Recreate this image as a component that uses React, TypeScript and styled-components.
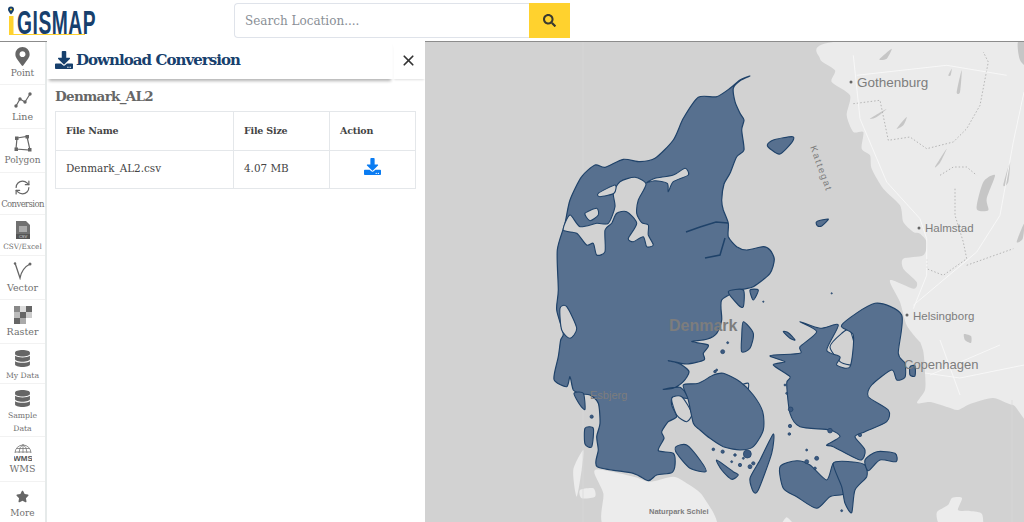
import React from "react";
import styled, { createGlobalStyle } from "styled-components";
import { FaDownload, FaMapMarkerAlt, FaSearch, FaStar, FaDatabase } from "react-icons/fa";
import { RefreshCw, X } from "lucide-react";

type Pt = [number, number];

// traced from crops of the map, so the numbers stay in crop coordinates
const north = (pts: Pt[]) => pts.map(([x, y]): Pt => [540 + x / 3, 60 + y / 3]);
const south = (pts: Pt[]) => pts.map(([x, y]): Pt => [540 + x / 3, 290 + y / 3]);
const right = (pts: Pt[]) => pts.map(([x, y]): Pt => [820 + x / 3, 42 + y / 3]);

// closed catmull-rom curve, coastlines look too angular as plain polygons
const toD = (pts: Pt[]) => {
  const n = pts.length;
  let d = `M${pts[0][0].toFixed(1)} ${pts[0][1].toFixed(1)}`;
  for (let i = 0; i < n; i++) {
    const [p0, p1, p2, p3] = [pts[(i - 1 + n) % n], pts[i], pts[(i + 1) % n], pts[(i + 2) % n]];
    const c1x = p1[0] + (p2[0] - p0[0]) / 8;
    const c1y = p1[1] + (p2[1] - p0[1]) / 8;
    const c2x = p2[0] - (p3[0] - p1[0]) / 8;
    const c2y = p2[1] - (p3[1] - p1[1]) / 8;
    d += `C${c1x.toFixed(1)} ${c1y.toFixed(1)} ${c2x.toFixed(1)} ${c2y.toFixed(1)} ${p2[0].toFixed(1)} ${p2[1].toFixed(1)}`;
  }
  return d + "Z";
};
const toLine = (pts: Pt[]) => "M" + pts.map(([x, y]) => `${x.toFixed(1)} ${y.toFixed(1)}`).join("L");

const jutland = toD([
  ...north([[630, 48], [600, 62], [580, 85], [585, 125], [600, 160], [612, 180], [605, 210], [612, 270], [590, 290], [570, 340], [552, 372], [545, 420], [550, 450], [565, 490], [565, 530], [590, 560], [620, 570], [670, 560], [690, 570], [703, 598], [690, 640], [640, 680], [600, 690]]),
  ...south([[545, 30], [545, 90], [530, 130], [500, 148], [455, 155], [505, 165], [490, 190], [492, 210], [440, 222], [385, 212], [420, 222], [447, 245], [430, 275], [400, 295], [370, 298], [420, 292], [445, 325], [400, 320], [395, 345], [410, 380], [385, 395], [365, 425], [372, 445], [355, 482], [400, 490], [405, 525], [395, 548], [350, 555], [325, 572], [280, 550], [172, 530], [175, 480], [170, 440], [180, 400], [175, 340], [150, 315], [125, 312], [100, 300], [90, 260], [80, 290], [42, 268], [55, 200], [62, 150], [70, 130], [50, 60], [55, 0]]),
  ...north([[52, 570], [75, 490], [90, 420], [125, 350], [165, 315], [195, 322], [250, 298], [300, 305], [345, 295], [400, 240], [430, 175], [475, 112], [530, 110], [570, 85], [600, 60]]),
]);

const fjords = [
  toD(north([[320, 368], [345, 355], [400, 345], [435, 325], [445, 345], [400, 365], [385, 395], [382, 370], [345, 362]])),
  toD(north([[240, 365], [285, 352], [318, 372], [295, 420], [290, 460], [305, 488], [325, 495], [325, 525], [340, 555], [320, 560], [310, 530], [280, 545], [265, 535], [290, 490], [260, 455], [230, 460], [215, 490], [195, 510], [195, 575], [170, 585], [160, 550], [140, 555], [110, 520], [70, 510], [90, 465], [120, 500], [170, 490], [205, 490], [225, 440], [220, 400]])),
  toD(north([[175, 400], [225, 375], [222, 400], [180, 410]])),
  toD(north([[135, 460], [170, 445], [175, 465], [150, 482]])),
  toD(south([[60, 55], [80, 50], [110, 115], [90, 145], [65, 120]])),
  toD(south([[395, 325], [425, 320], [455, 370], [440, 395], [410, 375]])),
  toD(south([[595, 290], [625, 280], [620, 310], [590, 315]])),
  toD(south([[870, 170], [905, 130], [930, 120], [950, 190], [960, 225], [930, 225], [900, 215]])),
];

const islands = [
  toD(north([[682, 255], [700, 240], [758, 230], [755, 248], [720, 282], [695, 270]])),
  toD(north([[830, 485], [865, 477], [845, 498], [832, 497]])),
  // Funen
  toD(south([[430, 285], [475, 280], [520, 255], [550, 250], [600, 275], [640, 315], [668, 365], [670, 420], [640, 470], [600, 480], [550, 470], [510, 445], [480, 420], [460, 400], [445, 330]])),
  // Als
  toD(south([[408, 470], [440, 465], [480, 510], [498, 545], [450, 535], [410, 490]])),
  // Langeland
  toD(south([[700, 432], [695, 490], [655, 600], [640, 605], [630, 565], [660, 510]])),
  // Aero
  toD(south([[530, 510], [580, 545], [595, 555], [575, 568], [545, 540]])),
  // Samso
  toD(south([[610, 95], [640, 130], [630, 175], [605, 185], [605, 140]])),
  toD(south([[565, 5], [610, 0], [610, 50], [595, 45]])),
  toD(south([[630, 0], [655, 0], [640, 30]])),
  toD(south([[135, 415], [160, 415], [155, 470], [135, 462]])),
  toD(south([[102, 310], [130, 310], [135, 358], [120, 345]])),
  // Zealand
  toD(south([[690, 197], [780, 190], [780, 170], [830, 125], [780, 95], [840, 115], [895, 105], [860, 180], [900, 200], [890, 225], [930, 230], [940, 135], [905, 105], [1005, 40], [1085, 75], [1075, 190], [1095, 220], [1095, 262], [1070, 270], [1055, 240], [995, 285], [985, 320], [1045, 360], [1040, 395], [975, 425], [945, 440], [975, 480], [960, 510], [880, 470], [860, 465], [900, 440], [870, 420], [780, 410], [750, 370], [740, 280], [750, 260], [700, 225], [735, 215]])),
  // Lolland
  toD(south([[720, 530], [770, 512], [810, 525], [860, 570], [880, 520], [905, 560], [915, 610], [870, 620], [830, 655], [770, 620], [730, 595]])),
  // Falster
  toD(south([[880, 520], [930, 515], [975, 525], [980, 560], [945, 600], [935, 668], [915, 640], [905, 590]])),
  // Mon
  toD(south([[975, 510], [1010, 485], [1065, 490], [1068, 515], [1020, 510], [985, 542]])),
  toD(south([[730, 125], [745, 128], [765, 150], [750, 145]])),
  toD(south([[1110, 230], [1125, 228], [1125, 258], [1110, 255]])),
];

const islets: [number, number, number][] = [
  [520, 478, 4], [548, 485, 5], [585, 495, 4], [622, 492, 12], [600, 525, 5], [630, 530, 6], [750, 408, 5], [748, 432, 4],
  [735, 285, 3], [740, 310, 3], [752, 358, 7], [525, 245, 4], [548, 185, 6], [800, 480, 3], [830, 505, 6], [825, 535, 4],
  [800, 515, 6], [870, 422, 7], [960, 435, 5], [875, 10, 2], [640, 520, 5], [575, 515, 3], [610, 505, 3], [905, 662, 3],
  [670, 35, 2], [155, 380, 5], [563, 158, 3], [530, 240, 3],
];

const sweden = toD([
  ...right([[40, 0], [0, 50], [45, 85], [35, 120], [90, 160], [80, 220], [100, 270], [130, 270], [125, 320], [150, 340], [155, 380], [190, 440], [240, 490], [250, 540], [280, 570], [300, 575], [320, 600], [310, 640], [250, 650], [250, 680], [290, 720], [280, 740], [210, 715], [240, 780], [260, 850], [300, 900]]),
  [915, 330], [923, 350], [925, 373], [925, 390], [917, 403], [930, 402], [947, 407], [958, 410], [970, 404], [993, 398], [1013, 405], [1040, 405], [1040, 30],
]);
const germany = toD(south([[165, 540], [280, 560], [330, 575], [400, 560], [440, 580], [490, 620], [520, 720], [205, 720], [190, 610]]));
const rugen = toD([[937, 512], [948, 505], [952, 498], [962, 498], [958, 510], [970, 511], [982, 514], [980, 530], [945, 530], [938, 522]]);

const lakes = [
  toD(right([[470, 500], [490, 420], [525, 400], [500, 470], [505, 505]])),
  toD(right([[345, 375], [380, 320], [360, 362]])),
  toD(right([[150, 230], [200, 200], [170, 225]])),
  toD(right([[178, 52], [215, 20], [200, 50]])),
  toD(right([[410, 150], [425, 85], [420, 150]])),
  toD(right([[550, 430], [570, 360], [565, 420]])),
  toD(right([[590, 600], [612, 545], [608, 590]])),
  toD(right([[385, 100], [395, 80], [392, 100]])),
  toD(right([[230, 260], [260, 225], [250, 250]])),
  toD([[1018, 42], [1030, 42], [1030, 68], [1020, 60]]),
  toD([[964, 334], [971, 336], [971, 343], [965, 340]]),
];

const dottedRoutes = [
  toLine(right([[100, 185], [180, 175], [205, 295], [270, 285], [320, 320], [400, 300], [440, 260], [480, 190], [505, 60], [490, 30]])),
  toLine(right([[360, 400], [400, 375], [440, 375], [470, 400]])),
  toLine(right([[405, 440], [405, 520], [430, 600], [440, 650], [370, 700], [320, 680], [320, 650]])),
  toLine(right([[440, 670], [580, 620]])),
  toLine(north([[340, 505], [375, 505], [430, 545], [490, 530]])),
];

const roads = [
  toLine(right([[100, 40], [120, 230], [200, 420], [300, 530], [320, 590], [320, 700], [280, 800]])),
  toLine(right([[612, 150], [580, 300], [540, 520], [470, 630], [280, 790]])),
  toLine(right([[110, 100], [380, 70], [560, 100]])),
  "M925 373L960 378L1024 365M940 340L960 395M930 375L1000 345",
];

const tools = [
  { label: "Point", size: 9, icon: <FaMapMarkerAlt size={19} /> },
  { label: "Line", size: 9.5, icon: <LineIcon /> },
  { label: "Polygon", size: 9, icon: <PolygonIcon /> },
  { label: "Conversion", size: 8.5, tight: true, icon: <RefreshCw size={17} strokeWidth={1.7} /> },
  { label: "CSV/Excel", size: 7.3, icon: <CsvIcon /> },
  { label: "Vector", size: 9.5, icon: <VectorIcon /> },
  { label: "Raster", size: 9.5, icon: <RasterIcon /> },
  { label: "My Data", size: 7.7, icon: <FaDatabase size={17} /> },
  { label: "Sample Data", size: 7.7, icon: <FaDatabase size={17} /> },
  { label: "WMS", size: 9.5, icon: <WmsIcon /> },
  { label: "More", size: 9, icon: <FaStar size={13} /> },
];

function LineIcon() {
  return (
    <svg width="18" height="18" viewBox="0 0 18 18" fill="none" stroke="#666" strokeWidth="1.2">
      <path d="M2 15L6 8L11 11L16 3" />
      <g fill="#666" stroke="none">
        <circle cx="2" cy="15" r="1.7" />
        <circle cx="6" cy="8" r="1.7" />
        <circle cx="11" cy="11" r="1.7" />
        <circle cx="16" cy="3" r="1.7" />
      </g>
    </svg>
  );
}

function PolygonIcon() {
  return (
    <svg width="18" height="18" viewBox="0 0 18 18" fill="none" stroke="#666" strokeWidth="1.2">
      <path d="M3 3L13 1.5L16 15L2 14Z" />
      <g fill="#666" stroke="none">
        <rect x="1" y="1.5" width="3.5" height="3.5" />
        <rect x="11.5" y="0" width="3.5" height="3.5" />
        <rect x="14" y="13" width="3.5" height="3.5" />
        <rect x="0.5" y="12.5" width="3.5" height="3.5" />
      </g>
    </svg>
  );
}

function CsvIcon() {
  return (
    <svg width="14" height="18" viewBox="0 0 14 18">
      <path d="M0 0H10L14 4V18H0Z" fill="#707070" />
      <path d="M3 5H11V11H3Z" fill="#aaa" />
      <path d="M0 13H14V18H0Z" fill="#555" />
      <text x="7" y="17" textAnchor="middle" fontFamily="Liberation Sans, sans-serif" fontSize="4" fill="#ddd">
        CSV
      </text>
    </svg>
  );
}

function VectorIcon() {
  return (
    <svg width="19" height="18" viewBox="0 0 19 18" fill="none" stroke="#666" strokeWidth="1.3">
      <path d="M2 1Q5 10 7 16Q9 6 17 2" />
      <circle cx="2" cy="1.5" r="1.2" fill="#666" stroke="none" />
      <circle cx="17" cy="2" r="1.5" fill="#666" stroke="none" />
    </svg>
  );
}

function RasterIcon() {
  return (
    <svg width="18" height="18" viewBox="0 0 18 18">
      <rect width="6" height="6" x="0" y="0" fill="#888" />
      <rect width="6" height="6" x="6" y="0" fill="#ddd" />
      <rect width="6" height="6" x="12" y="0" fill="#666" />
      <rect width="6" height="6" x="0" y="6" fill="#bbb" />
      <rect width="6" height="6" x="6" y="6" fill="#666" />
      <rect width="6" height="6" x="12" y="6" fill="#ccc" />
      <rect width="6" height="6" x="0" y="12" fill="#666" />
      <rect width="6" height="6" x="6" y="12" fill="#aaa" />
    </svg>
  );
}

function WmsIcon() {
  return (
    <svg width="18" height="20" viewBox="0 0 18 20" fill="none" stroke="#777" strokeWidth="0.8">
      <path d="M1 11A8 8 0 0 1 17 11M9 2.5V11M5 11Q5 5 9 2.5Q13 5 13 11M2.5 6.5H15.5M1 10H17" />
      <text x="9" y="19" textAnchor="middle" fontFamily="Liberation Sans, sans-serif" fontSize="8" fontWeight="700" fill="#555" stroke="none">
        WMS
      </text>
    </svg>
  );
}

function LogoStem() {
  return (
    <svg width="8" height="30" viewBox="0 0 8 30">
      <path d="M4 0.5A3 3 0 0 1 7 3.5Q7 5 4 8.5Q1 5 1 3.5A3 3 0 0 1 4 0.5Z" fill="#17406d" />
      <circle cx="4" cy="3.5" r="1.1" fill="#ffd22e" />
      <rect x="2" y="10" width="4.5" height="19" fill="#ffd22e" />
    </svg>
  );
}

const App = () => {
  return (
    <Page>
      <GlobalStyle />
      <Header>
        <Logo>
          <LogoStem />
          <LogoWord>
            <LogoText>GISMAP</LogoText>
          </LogoWord>
        </Logo>
        <SearchForm>
          <SearchInput placeholder="Search Location...." />
          <SearchBtn>
            <FaSearch size={13} />
          </SearchBtn>
        </SearchForm>
      </Header>
      <Body>
        <Sidebar>
          {tools.map((t) => (
            <Tool key={t.label}>
              <ToolIcon>{t.icon}</ToolIcon>
              <ToolLabel $size={t.size} $tight={t.tight}>
                {t.label}
              </ToolLabel>
            </Tool>
          ))}
        </Sidebar>
        <Panel>
          <PanelHead>
            <PanelTitle>
              <FaDownload size={18} />
              Download Conversion
            </PanelTitle>
            <CloseBtn>
              <X size={17} strokeWidth={2.4} />
            </CloseBtn>
          </PanelHead>
          <PanelBody>
            <DataName>Denmark_AL2</DataName>
            <Table>
              <thead>
                <tr>
                  <NameTh>File Name</NameTh>
                  <SizeTh>File Size</SizeTh>
                  <Th>Action</Th>
                </tr>
              </thead>
              <tbody>
                <tr>
                  <Td>Denmark_AL2.csv</Td>
                  <Td>4.07 MB</Td>
                  <ActionCell>
                    <FaDownload size={17} />
                  </ActionCell>
                </tr>
              </tbody>
            </Table>
          </PanelBody>
        </Panel>
        <MapArea>
          <MapSvg viewBox="425 42 599 480">
            <path d={sweden} fill="#ebebeb" />
            <path d={germany} fill="#ececec" />
            <path d={rugen} fill="#ececec" />
            <path d={toD(south([[100, 540], [130, 480], [125, 540], [110, 620]]))} fill="#ececec" />
            <path d={toD(south([[120, 600], [160, 595], [165, 620], [125, 625]]))} fill="#ececec" />
            <path d={toD(south([[720, 720], [740, 682], [770, 720]]))} fill="#ececec" />
            <TileSeam x1="583" y1="42" x2="583" y2="522" />
            <TileSeam x1="1012" y1="400" x2="1012" y2="522" />
            {lakes.map((d) => (
              <path key={d} d={d} fill="#c6c6c6" />
            ))}
            {dottedRoutes.map((d) => (
              <path key={d} d={d} fill="none" stroke="#b5b5b5" strokeWidth="1" strokeDasharray="1.5 2" />
            ))}
            {roads.map((d) => (
              <path key={d} d={d} fill="none" stroke="#f8f8f8" strokeWidth="0.9" />
            ))}
            <path d={jutland} fill="#57708f" stroke="#1f4269" strokeWidth="1.2" strokeLinejoin="round" />
            {fjords.map((d) => (
              <path key={d} d={d} fill="#d2d2d2" stroke="#1f4269" strokeWidth="1.1" strokeLinejoin="round" />
            ))}
            {islands.map((d) => (
              <path key={d} d={d} fill="#57708f" stroke="#1f4269" strokeWidth="1.1" strokeLinejoin="round" />
            ))}
            {islets.map(([x, y, r]) => (
              <circle key={`${x}-${y}`} cx={540 + x / 3} cy={290 + y / 3} r={r / 3} fill="#3d5a80" stroke="#1f4269" strokeWidth="0.7" />
            ))}
            <path d="M686 232L700 227L716 222L728 223M705 258L720 255L725 238" fill="none" stroke="#1f4269" strokeWidth="1.5" />
            <MapLabel x="857" y="87" fontSize="13.5">Gothenburg</MapLabel>
            <MapLabel x="925" y="232" fontSize="11.5">Halmstad</MapLabel>
            <MapLabel x="913" y="320" fontSize="11.5">Helsingborg</MapLabel>
            <MapLabel x="904" y="369" fontSize="13">Copenhagen</MapLabel>
            <MapLabel x="590" y="399" fontSize="11" fill="#4d5f75">Esbjerg</MapLabel>
            <MapLabel x="669" y="331" fontSize="16" fontWeight="700" fill="#34465e">Denmark</MapLabel>
            <MapLabel x="649" y="514" fontSize="7.5" fontWeight="700">Naturpark Schlei</MapLabel>
            <MapLabel x="0" y="0" fontSize="9.5" letterSpacing="1.6" transform="translate(810 147) rotate(70)">Kattegat</MapLabel>
            <circle cx="851" cy="82" r="1.5" fill="#666" />
            <circle cx="919" cy="228" r="1.5" fill="#666" />
            <circle cx="907" cy="315" r="1.5" fill="#666" />
          </MapSvg>
        </MapArea>
      </Body>
    </Page>
  );
};

const GlobalStyle = createGlobalStyle`
  html, body {
    margin: 0;
    padding: 0;
    height: 100%;
    overflow: hidden;
    background: #fff;
    font-family: "DejaVu Serif", "Liberation Serif", serif;
  }
`;

const Page = styled.div`
  width: 1024px;
  height: 522px;
  display: flex;
  flex-direction: column;
  overflow: hidden;
`;

const Header = styled.header`
  height: 41px;
  flex: none;
  display: flex;
  align-items: flex-start;
  border-bottom: 1px solid #8c8c8c;
  background: #fff;
`;

const Logo = styled.div`
  width: 234px;
  padding: 6px 0 0 7px;
  box-sizing: border-box;
  display: flex;
  align-items: flex-start;
  gap: 2px;
`;

const LogoWord = styled.div`
  position: relative;
  width: 80px;
  height: 25px;
  margin-top: 4px;
  &::after {
    content: "";
    position: absolute;
    left: -4px;
    bottom: 0;
    width: 72px;
    height: 1px;
    background: #ffd22e;
  }
`;

const LogoText = styled.span`
  display: block;
  font: 700 34px/25px "Liberation Sans", sans-serif;
  color: #17406d;
  letter-spacing: 1px;
  transform: scaleX(0.565);
  transform-origin: left center;
  white-space: nowrap;
`;

const SearchForm = styled.div`
  margin-top: 3px;
  width: 336px;
  height: 35px;
  display: flex;
`;

const SearchInput = styled.input`
  flex: 1;
  min-width: 0;
  box-sizing: border-box;
  border: 1px solid #dfe3ea;
  border-right: none;
  border-radius: 4px 0 0 4px;
  padding: 0 10px;
  font: 12px "DejaVu Serif", serif;
  outline: none;
  &::placeholder {
    color: #8a8f96;
  }
`;

const SearchBtn = styled.button`
  width: 41px;
  border: none;
  padding: 0;
  background: #ffd22e;
  color: #3a3a30;
  display: flex;
  align-items: center;
  justify-content: center;
`;

const Body = styled.div`
  flex: 1;
  min-height: 0;
  display: flex;
`;

const Sidebar = styled.nav`
  width: 45px;
  flex: none;
  border-right: 2px solid #e6eaea;
  display: grid;
  grid-template-rows: 43px 44px 44px 42px 41px 44px 44px 40px 53px 45px 45px;
  overflow: hidden;
`;

const Tool = styled.div`
  box-sizing: border-box;
  padding-top: 4px;
  display: flex;
  flex-direction: column;
  align-items: center;
  color: #666;
  border-bottom: 1px solid #f2f2f2;
`;

const ToolIcon = styled.div`
  height: 21px;
  flex: none;
  display: flex;
  align-items: center;
  justify-content: center;
`;

const ToolLabel = styled.span<{ $size: number; $tight?: boolean }>`
  font-size: ${(p) => p.$size}px;
  letter-spacing: ${(p) => (p.$tight ? "-0.6px" : "0")};
  line-height: 13px;
  color: #707070;
  text-align: center;
`;

const Panel = styled.section`
  width: 378px;
  flex: none;
  margin-top: -1px;
  background: #fff;
`;

const PanelHead = styled.div`
  height: 38px;
  display: flex;
`;

const PanelTitle = styled.h2`
  flex: 1;
  margin: 0;
  padding-left: 8px;
  display: flex;
  align-items: center;
  gap: 3px;
  font-size: 15px;
  letter-spacing: -0.95px;
  font-weight: 700;
  color: #17406d;
  box-shadow: 0 4px 3px -2px rgba(0, 0, 0, 0.3);
`;

const CloseBtn = styled.span`
  width: 32px;
  flex: none;
  padding-right: 2px;
  box-sizing: border-box;
  color: #333;
  display: flex;
  align-items: center;
  justify-content: center;
  box-shadow: 0 2px 2px -1px rgba(0, 0, 0, 0.12);
`;

const PanelBody = styled.div`
  padding: 7px 8px 0 8px;
`;

const DataName = styled.h3`
  margin: 0 0 5px;
  font-size: 13.5px;
  letter-spacing: -0.7px;
  line-height: 20px;
  font-weight: 700;
  color: #666;
`;

const Table = styled.table`
  width: 361px;
  border-collapse: collapse;
  table-layout: fixed;
  font-size: 10.4px;
  color: #444;
`;

const Th = styled.th`
  box-sizing: border-box;
  height: 39px;
  padding: 0 10px 2px;
  text-align: left;
  font-size: 9.5px;
  font-weight: 700;
  letter-spacing: -0.2px;
  border: 1px solid #e4e7ea;
`;

const NameTh = styled(Th)`
  width: 178px;
`;

const SizeTh = styled(Th)`
  width: 96px;
`;

const Td = styled.td`
  box-sizing: border-box;
  height: 38px;
  padding: 0 10px 4px;
  border: 1px solid #e4e7ea;
`;

const ActionCell = styled(Td)`
  color: #0a7cf2;
  text-align: center;
`;

const MapArea = styled.div`
  flex: 1;
  min-width: 0;
  background: #d2d2d2;
`;

const MapSvg = styled.svg`
  display: block;
  width: 100%;
  height: 100%;
`;

const TileSeam = styled.line`
  stroke: #dadada;
  stroke-width: 0.7;
`;

const MapLabel = styled.text`
  font-family: "Liberation Sans", sans-serif;
  fill: #7d7d7d;
`;

export default App;
